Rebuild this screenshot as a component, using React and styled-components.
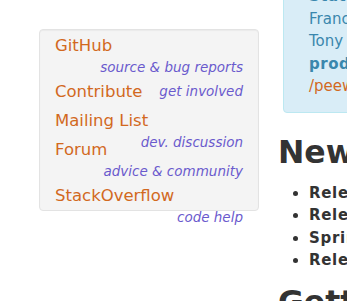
import React from "react"
import styled, { createGlobalStyle } from "styled-components"

const GlobalStyle = createGlobalStyle`
  html, body {
    margin: 0;
    padding: 0;
    overflow: hidden;
    background: #fff;
  }
  body {
    font-family: "DejaVu Sans", Verdana, sans-serif;
    font-size: 15px;
    line-height: 22.5px;
    color: #333;
  }
`

const Page = styled.div`
  width: 347px;
  height: 301px;
  overflow: hidden;
  display: flex;
  align-items: flex-start;
`

const Sidebar = styled.aside`
  flex: none;
  width: 220px;
  margin: 29px 0 0 39px;
`

const Well = styled.div`
  box-sizing: border-box;
  background-color: #f4f4f4;
  border: 1px solid #e3e3e3;
  border-radius: 4px;
  box-shadow: inset 0 1px 1px rgba(0, 0, 0, 0.04);
  padding: 1px 15px 0 15px;
`

const Row = styled.div`
  display: flex;
  justify-content: space-between;
  align-items: ${props => props.$align || "center"};
  line-height: 29px;
`

const NavLink = styled.a`
  font-size: 16.5px;
  color: #d2691e;
  text-decoration: none;
  white-space: nowrap;
`

const Desc = styled.small`
  display: block;
  font-size: 13.5px;
  line-height: 15px;
  font-style: italic;
  color: #6a5acd;
  text-align: right;
  white-space: nowrap;
  margin-bottom: ${props => (props.$inline ? "0" : "2px")};
`

const Outside = styled(Desc)`
  padding-right: 16px;
  margin-top: -1px;
`

const Main = styled.main`
  flex: none;
  width: 400px;
  margin: -30px 0 0 19px;
`

const Alert = styled.div`
  background-color: #d9edf7;
  border: 1px solid #bce8f1;
  border-radius: 4px;
  color: #3a87ad;
  padding: 14px 20px 14px 25px;
  margin-left: 5px;
  span,
  b {
    display: block;
    white-space: nowrap;
  }
  b {
    letter-spacing: 0.5px;
  }
  a {
    color: #d2691e;
    text-decoration: none;
  }
`

const Heading = styled.h2`
  font-size: 31.5px;
  line-height: 40px;
  font-weight: bold;
  color: #333;
  margin: 19px 0 10px;
  white-space: nowrap;
`

const NextHeading = styled(Heading)`
  margin-top: 10px;
`

const News = styled.ul`
  margin: 1px 0 10px;
  padding-left: 31px;
  li {
    font-weight: bold;
    letter-spacing: 0.7px;
    color: #333;
    white-space: nowrap;
  }
`

const links = [
  { title: "GitHub", desc: "source & bug reports", layout: "below" },
  { title: "Contribute", desc: "get involved", layout: "inline" },
  { title: "Mailing List" },
  { title: "Forum", desc: "dev. discussion", layout: "top", after: "advice & community" },
]

export default function App() {
  return (
    <>
      <GlobalStyle />
      <Page>
        <Sidebar>
          <Well>
            {links.map(({ title, desc, layout, after }) => (
              <React.Fragment key={title}>
                <Row $align={layout === "top" ? "flex-start" : "center"}>
                  <NavLink href="#">{title}</NavLink>
                  {(layout === "inline" || layout === "top") && (
                    <Desc $inline>{desc}</Desc>
                  )}
                </Row>
                {layout === "below" && <Desc>{desc}</Desc>}
                {after && <Desc>{after}</Desc>}
              </React.Fragment>
            ))}
            <Row>
              <NavLink href="#">StackOverflow</NavLink>
            </Row>
          </Well>
          <Outside>code help</Outside>
        </Sidebar>
        <Main>
          <Alert>
            <b>Status: stable release</b>
            <span>Francesco and the core team</span>
            <span>Tony keeps the docs current for</span>
            <b>production use — see</b>
            <a href="#">/peewee/releases</a>
          </Alert>
          <Heading>News</Heading>
          <News>
            <li>Release 3.17 is out</li>
            <li>Release 3.16 notes</li>
            <li>Spring sprint recap</li>
            <li>Release 3.15 is out</li>
          </News>
          <NextHeading>Getting started</NextHeading>
        </Main>
      </Page>
    </>
  )
}
